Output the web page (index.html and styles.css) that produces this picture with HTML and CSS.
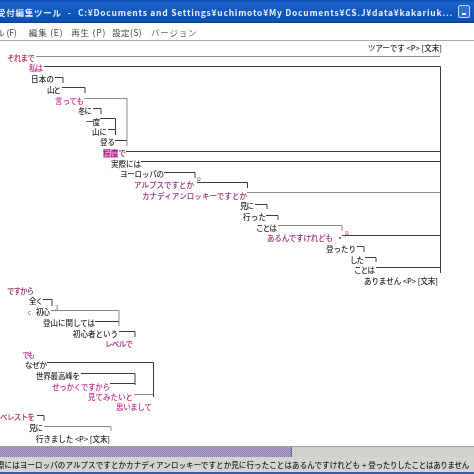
FILE: index.html
```html
<!DOCTYPE html>
<html lang="ja">
<head>
<meta charset="utf-8">
<title>受付編集ツール</title>
<link rel="stylesheet" href="styles.css">
</head>
<body>
<div class="app">
  <header class="titlebar">
    <span class="title"><span class="title-app">受付編集ツール - </span>C:¥Documents and Settings¥uchimoto¥My Documents¥CS.J¥data¥kakariuk...</span>
    <span class="minbtn"><span class="minbar"></span></span>
  </header>
  <nav class="menu">
    <span class="m m1">ル (F)</span>
    <span class="m m2">編集 (E)</span>
    <span class="m m3">再生 (P)</span>
    <span class="m m4">設定(S)</span>
    <span class="m m5">バージョン</span>
  </nav>
  <svg class="tree" viewBox="0 41 474 405" width="474" height="405">
    <g class="gray">
      <path d="M36 56.5H440"/>
      <path d="M84 98.5H127V146"/>
      <path d="M247 192.5H440"/>
      <path d="M278 225.5H342V231"/>
      <path d="M51 310.5H119V326"/>
      <path d="M134 394.5H153"/>
      <path d="M44 426.5H111V431"/>
    </g>
    <g class="dark">
      <path d="M44 66.5H440.500V273"/>
      <path d="M55 77.500H63V83"/>
      <path d="M62 87.500H85V93"/>
      <path d="M93 108.500H101V114"/>
      <path d="M100 118.500H115.500V135"/>
      <path d="M108 129.500H115"/>
      <path d="M115 140.500H127"/>
      <path d="M126 151.500H440"/>
      <path d="M141 161.500H440"/>
      <path d="M164 172.500H195V178"/>
      <path d="M197 182.500H247.500V188"/>
      <path d="M255 204.500H267V209"/>
      <path d="M266 215.500H278V220"/>
      <path d="M342 235.500H440"/>
      <path d="M357 246.500H364V252"/>
      <path d="M365 257.500H376V262"/>
      <path d="M376 267.500H440"/>
      <path d="M43 299.500H52V306"/>
      <path d="M95 321.500H119"/>
      <path d="M119 331.500H135V337"/>
      <path d="M47 362.500H153.500V397"/>
      <path d="M81 373.500H135V385"/>
      <path d="M110 383.500H135"/>
      <path d="M37 415.500H44V421"/>
    </g>
    <rect class="hl" x="103" y="149" width="15" height="9"/>
    <g class="ink">
      <text x="368" y="51" textLength="74">ツアーです &lt;P&gt; [文末]</text>
      <text x="31" y="82" textLength="23">日本の</text>
      <text x="47" y="93" textLength="14">山と</text>
      <text x="78" y="114" textLength="14">冬に</text>
      <text x="86" y="125" textLength="14">一度</text>
      <text x="92" y="135" textLength="15">山に</text>
      <text x="100" y="145" textLength="15">登る</text>
      <text x="111" y="167" textLength="30">実際には</text>
      <text x="120" y="177" textLength="44">ヨーロッパの</text>
      <text x="240" y="209" textLength="14">見に</text>
      <text x="243" y="220" textLength="23">行った</text>
      <text x="256" y="231" textLength="21">ことは</text>
      <text x="326" y="252" textLength="30">登ったり</text>
      <text x="350" y="263" textLength="14">した</text>
      <text x="354" y="273" textLength="21">ことは</text>
      <text x="364" y="284" textLength="74">ありません &lt;P&gt; [文末]</text>
      <text x="29" y="304" textLength="14">全く</text>
      <text x="36" y="315" textLength="14">初心</text>
      <text x="43" y="326" textLength="52">登山に関しては</text>
      <text x="73" y="337" textLength="45">初心者という</text>
      <text x="25" y="368" textLength="22">なぜか</text>
      <text x="36" y="379" textLength="44">世界最高峰を</text>
      <text x="29" y="431" textLength="14">見に</text>
      <text x="36" y="442" textLength="74">行きました &lt;P&gt; [文末]</text>
    </g>
    <g class="pink">
      <text class="crim" x="7" y="61" textLength="28">それまで</text>
      <text x="29" y="71" textLength="14">私は</text>
      <text x="55" y="104" textLength="29">言っても</text>
      <text class="onhl" x="103" y="156" textLength="23">程度で</text>
      <text class="plum" x="134" y="188" textLength="60">アルプスですとか</text>
      <text class="small" x="197" y="181">p</text>
      <text class="plum" x="142" y="199" textLength="105">カナディアンロッキーですとか</text>
      <text class="plum" x="267" y="241" textLength="66">あるんですけれども</text>
      <text class="small" x="345" y="235">p</text>
      <text class="plum" x="7" y="294" textLength="27">ですから</text>
      <text class="small" x="28" y="315">c</text>
      <text class="small" x="55" y="310">3</text>
      <text class="plum" x="105" y="347" textLength="28">レベルで</text>
      <text x="22" y="358" textLength="13">でも</text>
      <text x="52" y="390" textLength="58">せっかくですから</text>
      <text x="88" y="400" textLength="45">見てみたいと</text>
      <text x="116" y="410" textLength="36">思いまして</text>
      <text class="crim" x="0" y="420" textLength="35">ベレストを</text>
    </g>
    <circle class="dot" cx="340" cy="238" r="1"/>
  </svg>
  <div class="scrollbar"><div class="thumb"></div></div>
  <div class="status"><span class="status-a">際にはヨーロッパのアルプスですとかカナディアンロッキーですとか見に行ったことはあるんですけれども</span><span class="status-plus">+</span><span class="status-b">登ったりしたことはありません</span></div>
  <div class="bottom"></div>
</div>
</body>
</html>
```
FILE: styles.css
```css
html, body {
  margin: 0;
  padding: 0;
  background: #fff;
  overflow: hidden;
}

.app {
  width: 474px;
  height: 474px;
  display: flex;
  flex-direction: column;
  overflow: hidden;
  font-family: "Noto Sans CJK JP", "Liberation Sans", sans-serif;
  filter: blur(0.35px);
}

.titlebar {
  height: 23px;
  flex: none;
  display: flex;
  align-items: center;
  justify-content: space-between;
  padding: 0 4px 0 0;
  box-sizing: border-box;
  background: linear-gradient(#0a4cb0 0, #1a62c8 12%, #0e56bb 60%, #0c50b4 90%, #0a3f94 100%);
  overflow: hidden;
}

.title {
  color: #e8eef8;
  font-size: 8.5px;
  font-weight: 700;
  letter-spacing: 0.74px;
  white-space: nowrap;
  margin-left: -3px;
}

.title-app {
  word-spacing: 3.5px;
}

.minbtn {
  width: 12px;
  height: 13px;
  flex: none;
  display: flex;
  align-items: flex-end;
  padding: 0 0 2px 3px;
  box-sizing: border-box;
  background: #2f6fd6;
  border: 1px solid #c8d8f0;
  border-radius: 2px;
}

.minbar {
  width: 4px;
  height: 2px;
  background: #fff;
}

.menu {
  height: 18px;
  flex: none;
  display: flex;
  align-items: center;
  box-sizing: border-box;
  background: #fff;
  border-bottom: 1px solid #a8a8a8;
  color: #444;
  font-size: 8.5px;
  white-space: nowrap;
}

.m1 { margin-left: -4px; }
.m2 { margin-left: 12px; letter-spacing: 0.8px; }
.m3 { margin-left: 8px; letter-spacing: 0.8px; }
.m4 { margin-left: 6px; letter-spacing: 0.4px; }
.m5 { margin-left: 9px; letter-spacing: 0.8px; color: #666; }

.tree {
  display: block;
  flex: none;
  background: #fff;
}

.tree path {
  fill: none;
  stroke-width: 1;
}

.tree text {
  font-size: 7.5px;
  font-weight: 500;
  font-family: "Noto Sans CJK JP", "Liberation Sans", sans-serif;
}

.gray path { stroke: #8c8c8c; }
.dark path { stroke: #3c3c3c; }
.ink text { fill: #2a2a2a; }
.pink text { fill: #c22c8c; }
.tree .crim { fill: #b8285c; }
.tree .plum { fill: #96306e; }
.tree .onhl { fill: #8e1c62; }
.tree .small { font-size: 6px; fill: #c0607a; }
.hl { fill: #f59ade; }
.dot { fill: #444; }

.scrollbar {
  height: 11px;
  flex: none;
  display: flex;
  box-sizing: border-box;
  background: #d2d0cc;
  border-top: 1px solid #a0a0a0;
}

.thumb {
  width: 292px;
  box-sizing: border-box;
  border-right: 1px solid #6c6880;
  background: repeating-conic-gradient(#8c7cb0 0 25%, #b6a9cf 0 50%) 0 0 / 2px 2px;
}

.status {
  height: 15px;
  flex: none;
  display: flex;
  align-items: center;
  background: #d6d4d0;
  overflow: hidden;
  color: #222;
  font-size: 7.5px;
  font-weight: 500;
  white-space: nowrap;
}

.status-a {
  letter-spacing: 0.1px;
  margin-left: -3px;
}

.status-plus {
  margin: 0 2px;
}

.status-b {
  letter-spacing: -0.3px;
}

.bottom {
  flex: 1;
  background: #3a5ca8;
}
```
